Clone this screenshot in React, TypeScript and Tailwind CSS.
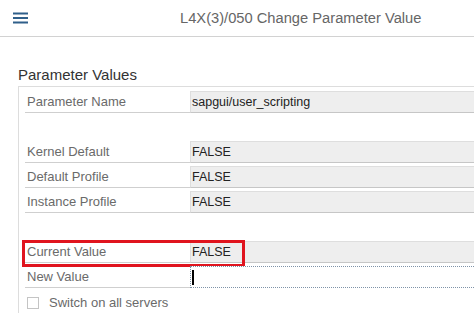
import React from "react";

const labelFont = { fontFamily: '"Liberation Sans", Arial, sans-serif' };

function Row({
  label,
  value,
  kind = "ro",
  highlight = false,
}: {
  label: string;
  value?: string;
  kind?: "ro" | "edit";
  highlight?: boolean;
}) {
  return (
    <div className="relative flex h-[25px] items-end">
      <div className="flex h-[22px] w-[165px] shrink-0 items-center border-b border-[#cfcfcf] pl-[2px] pt-[1px] text-[13px] text-[#6a6a6a]">
        {label}
      </div>
      {kind === "ro" ? (
        <div className="flex h-[22px] w-[320px] shrink-0 items-center border border-[#dedede] border-b-[#c6c6c6] bg-[#eeeeee] pl-[1px] pt-[1px] text-[12.5px] text-[#222]">
          {value}
        </div>
      ) : (
        <div className="flex h-[22px] w-[320px] shrink-0 items-center border border-dotted border-[#7f93a8] bg-white pl-[1px]">
          <div className="h-[15px] w-[2px] bg-black" />
        </div>
      )}
      {highlight && (
        <div className="pointer-events-none absolute left-[-3px] top-[2px] h-[27px] w-[223px] border-[3px] border-[#e0141e]" />
      )}
    </div>
  );
}

export default function App() {
  return (
    <div
      className="relative h-[320px] w-[474px] overflow-hidden bg-white"
      style={labelFont}
    >
      <header className="flex h-[37px] items-center border-b border-[#d2d2d2]">
        <svg
          className="ml-[13px] shrink-0"
          width="15"
          height="12"
          viewBox="0 0 15 12"
        >
          <rect x="0" y="0.5" width="15" height="2" fill="#2f5f8a" />
          <rect x="0" y="5" width="15" height="2" fill="#2f5f8a" />
          <rect x="0" y="9.5" width="15" height="2" fill="#2f5f8a" />
        </svg>
        <div className="ml-[152px] whitespace-nowrap text-[14.7px] text-[#666]">
          L4X(3)/050 Change Parameter Value
        </div>
      </header>

      <div className="ml-[18px] mt-[29px] text-[15px] leading-[18px] text-[#333]">
        Parameter Values
      </div>

      <div className="ml-[18px] mt-[2px] border-l border-t border-[#dddddd] pl-[6px] pt-[1px]">
        <Row label="Parameter Name" value="sapgui/user_scripting" />
        <div className="h-[25px]" />
        <Row label="Kernel Default" value="FALSE" />
        <Row label="Default Profile" value="FALSE" />
        <Row label="Instance Profile" value="FALSE" />
        <div className="h-[25px]" />
        <Row label="Current Value" value="FALSE" highlight />
        <Row label="New Value" kind="edit" />
        <div className="flex h-[25px] items-center pt-[5px]">
          <div className="ml-[2px] h-[12px] w-[12px] border border-[#c4c4c4] bg-white" />
          <span className="ml-[10px] text-[13px] text-[#6a6a6a]">
            Switch on all servers
          </span>
        </div>
      </div>
    </div>
  );
}
